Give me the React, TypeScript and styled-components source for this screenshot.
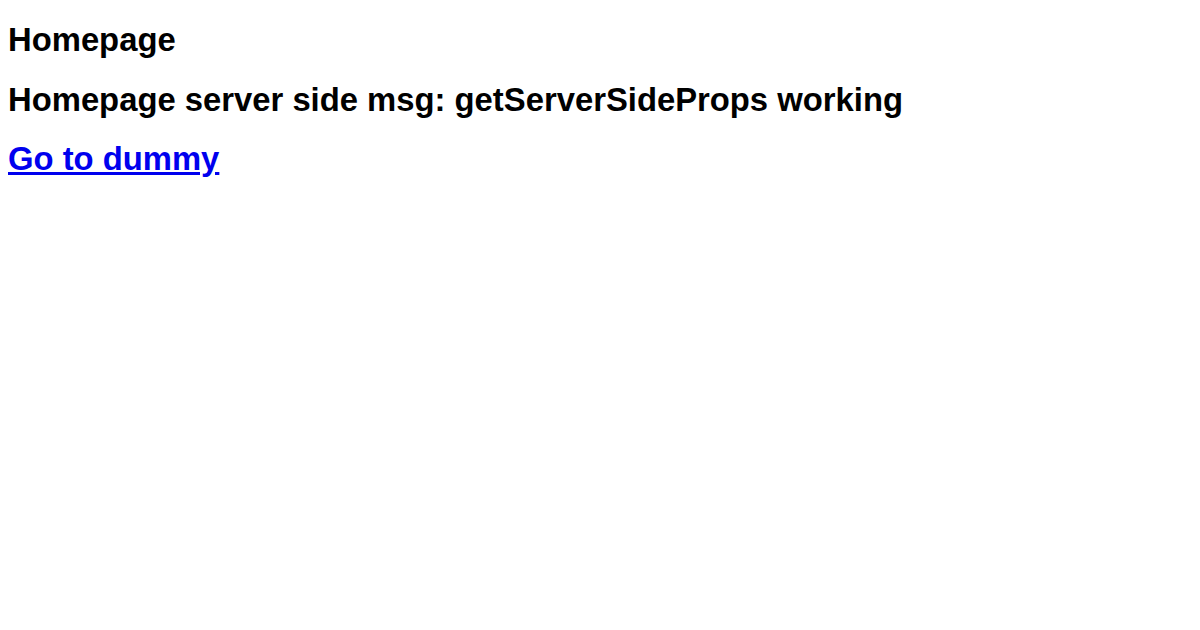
import styled, { createGlobalStyle } from "styled-components";

const GlobalStyle = createGlobalStyle`
  body {
    margin: 0 8px;
    background: #fff;
    font-family: "Liberation Sans", Arial, sans-serif;
  }
`;

const Page = styled.main`
  display: flow-root;
`;

const Heading = styled.h1`
  font-size: 32.8px;
  font-weight: bold;
  margin: 21.3px 0;
  color: #000;
`;

const DummyLink = styled.a`
  color: #0000ee;
  text-decoration: underline;
`;

const App = () => {
  return (
    <>
      <GlobalStyle />
      <Page>
        <Heading>Homepage</Heading>
        <Heading>Homepage server side msg: getServerSideProps working</Heading>
        <Heading>
          <DummyLink href="#">Go to dummy</DummyLink>
        </Heading>
      </Page>
    </>
  );
};

export default App;
